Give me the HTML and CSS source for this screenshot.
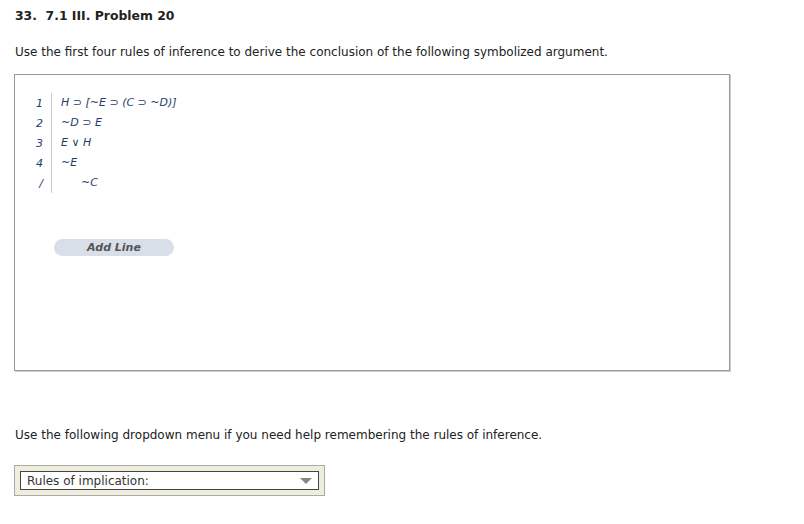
FILE: index.html
```html
<!DOCTYPE html>
<html lang="en">
<head>
    <meta charset="UTF-8">
    <title>Problem 20</title>
    <link rel="stylesheet" href="styles.css">
</head>
<body>
    <h1 class="title">33.&nbsp; 7.1 III. Problem 20</h1>
    <p class="prompt">Use the first four rules of inference to derive the conclusion of the following symbolized argument.</p>

    <div class="proof-box">
        <div class="proof">
            <div class="proof-row"><span class="num">1</span><span class="line">H ⊃ [~E ⊃ (C ⊃ ~D)]</span></div>
            <div class="proof-row"><span class="num">2</span><span class="line">~D ⊃ E</span></div>
            <div class="proof-row"><span class="num">3</span><span class="line">E ∨ H</span></div>
            <div class="proof-row"><span class="num">4</span><span class="line">~E</span></div>
            <div class="proof-row"><span class="num">/</span><span class="line concl">~C</span></div>
        </div>
        <button class="add-line">Add Line</button>
    </div>

    <p class="help">Use the following dropdown menu if you need help remembering the rules of inference.</p>

    <div class="rules-wrap">
        <div class="rules-select">
            <span>Rules of implication:</span>
            <span class="arrow"></span>
        </div>
    </div>
</body>
</html>
```

FILE: styles.css
```css
body {
    margin: 0;
    padding: 8px 14px;
    font-family: "DejaVu Sans", Verdana, sans-serif;
    font-size: 12px;
    color: #222;
    background: #fff;
}
.title {
    font-size: 12.4px;
    font-weight: bold;
    margin: 0 0 0 1px;
    line-height: 16px;
}
.prompt {
    margin: 20px 0 0 1px;
    line-height: 16px;
}
.proof-box {
    margin-top: 14px;
    width: 714px;
    height: 277px;
    border: 1px solid #999;
    box-shadow: 1px 1px 0 #ccc;
    padding-top: 18px;
}
.proof {
    display: flex;
    flex-direction: column;
}
.proof-row {
    display: flex;
    height: 20px;
    align-items: center;
    font-style: italic;
    font-size: 11px;
    color: #1f3d6b;
}
.num {
    width: 28px;
    text-align: right;
    padding-right: 8px;
}
.line {
    border-left: 1px solid #ccc;
    height: 20px;
    line-height: 20px;
    padding-left: 9px;
}
.line.concl {
    padding-left: 29px;
}
.add-line {
    display: block;
    margin: 46px 0 0 39px;
    width: 120px;
    height: 17px;
    border: none;
    border-radius: 9px;
    background: #d8dfe8;
    color: #555;
    font-family: "DejaVu Sans", Verdana, sans-serif;
    font-size: 11px;
    font-weight: bold;
    font-style: italic;
    padding: 0;
}
.help {
    margin: 56px 0 0 1px;
    line-height: 16px;
}
.rules-wrap {
    margin-top: 22px;
    width: 299px;
    padding: 5px;
    background: #efeddc;
    border: 1px solid #aaa;
}
.rules-select {
    display: flex;
    justify-content: space-between;
    align-items: center;
    height: 17px;
    border: 1px solid #444;
    background: #fff;
    padding: 0 6px;
    color: #333;
}
.arrow {
    width: 0;
    height: 0;
    border-left: 6px solid transparent;
    border-right: 6px solid transparent;
    border-top: 6px solid #888;
}
```
